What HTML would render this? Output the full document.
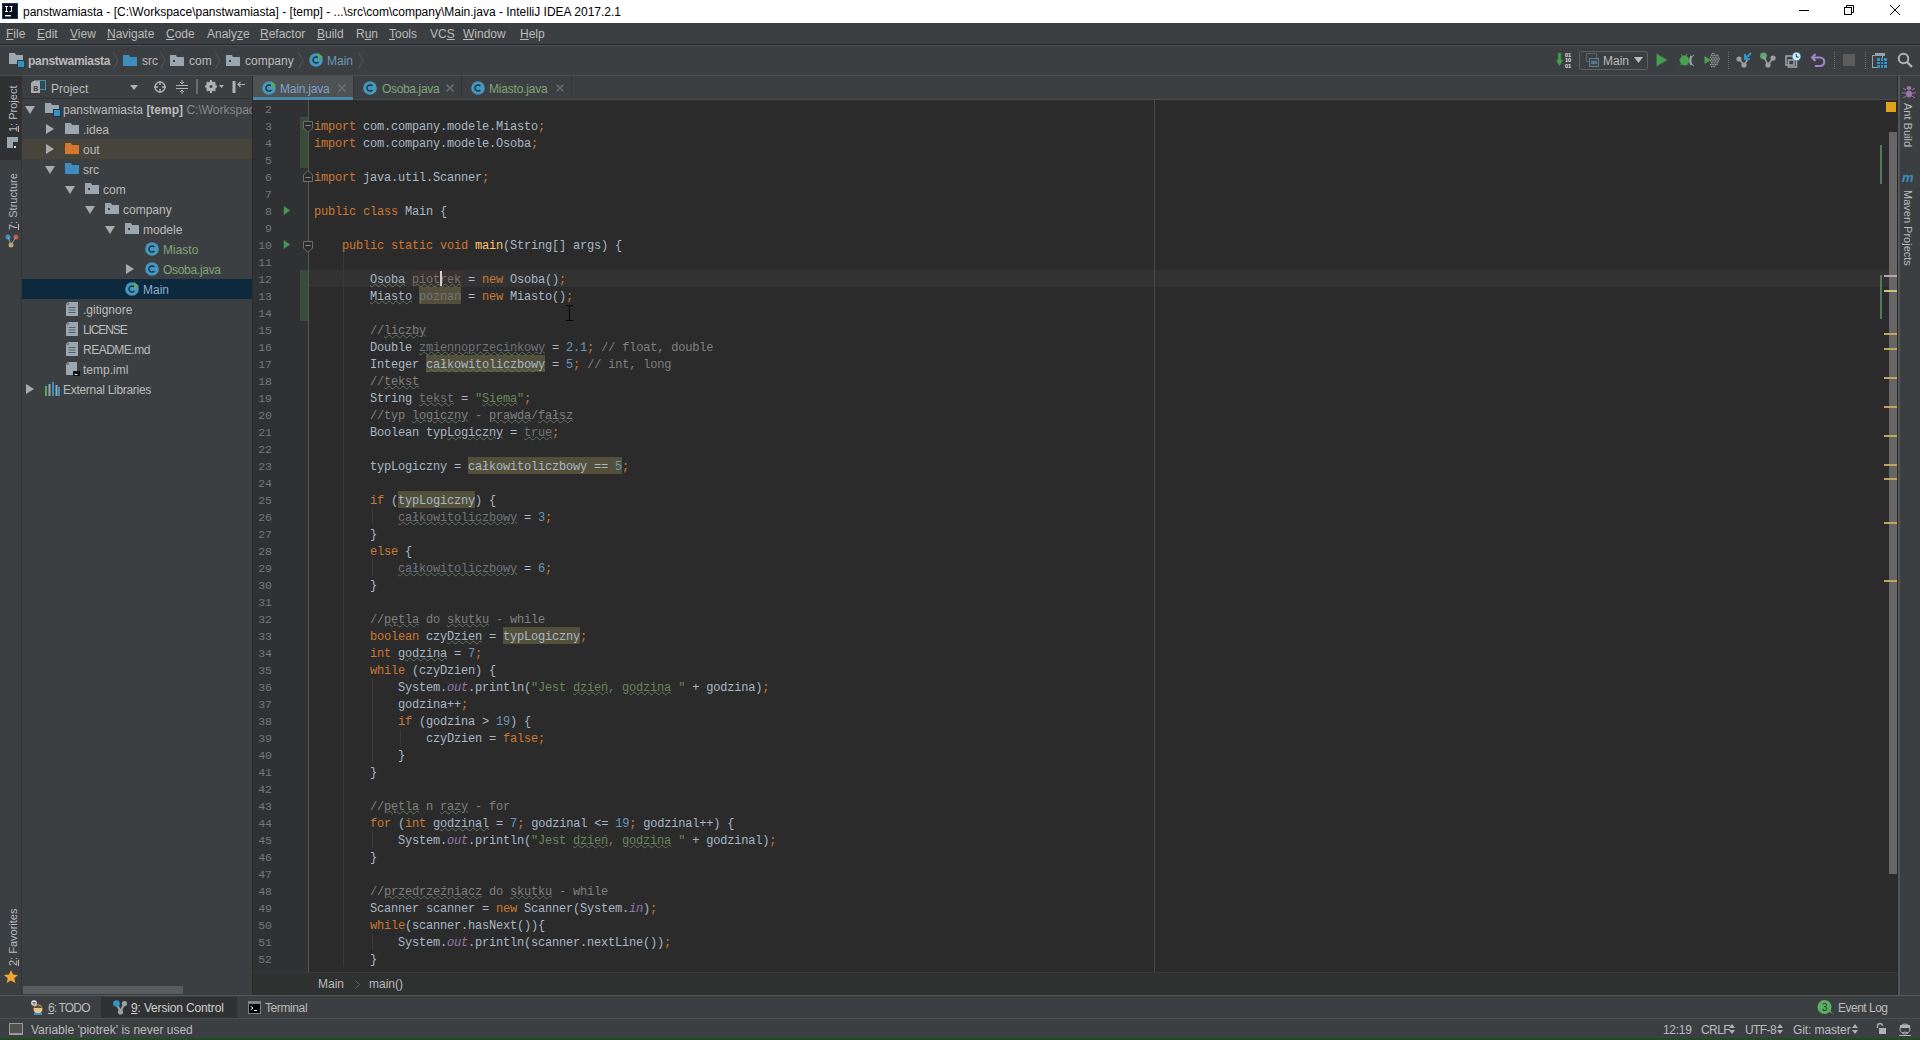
<!DOCTYPE html>
<html><head><meta charset="utf-8">
<style>
*{margin:0;padding:0;box-sizing:border-box}
html,body{width:1920px;height:1040px;overflow:hidden;background:#3C3F41;font-family:"Liberation Sans",sans-serif;font-size:12px;color:#BBBBBB}
.a{position:absolute}
.t{position:absolute;white-space:pre;line-height:14px}
#title{left:0;top:0;width:1920px;height:23px;background:#FFFFFF}
#menu{left:0;top:23px;width:1920px;height:21px;background:#3C3F41}
#nav{left:0;top:46px;width:1920px;height:29px;background:#3C3F41}
#code .l{position:absolute;left:314px;height:17px;line-height:17px;font-family:"Liberation Mono",monospace;font-size:12px;letter-spacing:-0.2px;color:#A9B7C6;white-space:pre}
#gut .n{position:absolute;width:20px;left:252px;text-align:right;height:17px;line-height:17px;font-family:"Liberation Mono",monospace;font-size:11.5px;color:#74777A}
.kw{color:#CC7832}.num{color:#6897BB}.str{color:#6A8759}.cm{color:#808080}.mt{color:#FFC66D}.st{color:#9876AA;font-style:italic}.un{color:#72737A}
.wr{background:#52503A}
.ty{text-decoration:underline wavy #5F7462;text-decoration-thickness:1px;text-underline-offset:0px}
</style></head><body>
<!-- title bar -->
<div id="title" class="a"></div>
<svg class="a" style="left:2px;top:3px" width="16" height="16" viewBox="0 0 16 16"><rect x="0" y="0" width="16" height="16" fill="#07101E"/><rect x="0.5" y="0.5" width="15" height="15" fill="none" stroke="#1E3A5A" stroke-width="1"/><path d="M3 3 H6 V4 H5 V8 H6 V9 H3 V8 H4 V4 H3 Z" fill="#fff"/><path d="M7.5 3 H10.5 V4 H10 V8 Q10 9 9 9 H7.5 V8 H9 V4 H7.5 Z" fill="#fff"/><rect x="3" y="12" width="6" height="1.4" fill="#fff"/></svg>
<div class="t" style="left:23px;top:5px;color:#000;font-size:12px">panstwamiasta - [C:\Workspace\panstwamiasta] - [temp] - ...\src\com\company\Main.java - IntelliJ IDEA 2017.2.1</div>

<div id="menu" class="a"></div>
<div class="a" style="left:0;top:44px;width:1920px;height:1px;background:#25272A"></div>
<div class="a" style="left:0;top:45px;width:1920px;height:1px;background:#4E5254"></div>
<div id="nav" class="a"></div>
<div class="a" style="left:0;top:75px;width:1920px;height:1px;background:#4A4D4F"></div>

<!-- left stripe -->
<div class="a" style="left:0;top:76px;width:21px;height:919px;background:#3C3F41"></div>
<div class="a" style="left:0;top:76px;width:21px;height:84px;background:#2F3133"></div>
<div class="a" style="left:21px;top:76px;width:1px;height:919px;background:#323436"></div>

<!-- project panel -->
<div class="a" style="left:22px;top:76px;width:230px;height:919px;background:#3C3F41"></div>
<div class="a" style="left:22px;top:98px;width:230px;height:1px;background:#323232"></div>
<div class="a" style="left:252px;top:76px;width:1px;height:919px;background:#2B2B2B"></div>

<!-- editor -->
<div class="a" style="left:253px;top:76px;width:1645px;height:23px;background:#3C3F41"></div>
<div class="a" style="left:253px;top:99px;width:1645px;height:1px;background:#4B4B4B"></div>
<div class="a" style="left:253px;top:100px;width:1645px;height:873px;background:#2B2B2B"></div>
<div class="a" style="left:253px;top:100px;width:56px;height:873px;background:#303132"></div>
<div class="a" style="left:308px;top:100px;width:1px;height:873px;background:#555555"></div>
<div class="a" style="left:1154px;top:100px;width:1px;height:873px;background:#4A4A4A"></div>
<div class="a" style="left:253px;top:972px;width:1645px;height:1px;background:#3A3A3A"></div>
<div class="a" style="left:253px;top:973px;width:1645px;height:22px;background:#2F3030"></div>

<!-- right stripe -->
<div class="a" style="left:1897px;top:76px;width:1px;height:919px;background:#2B2B2B"></div>
<div class="a" style="left:1898px;top:76px;width:2px;height:919px;background:#555555"></div>
<div class="a" style="left:1900px;top:76px;width:20px;height:919px;background:#3C3F41"></div>

<!-- bottom -->
<div class="a" style="left:0;top:995px;width:1920px;height:1px;background:#515658"></div>
<div class="a" style="left:0;top:996px;width:1920px;height:22px;background:#3C3F41"></div>
<div class="a" style="left:0;top:1018px;width:1920px;height:1px;background:#4A4D4F"></div>
<div class="a" style="left:0;top:1019px;width:1920px;height:19px;background:#3C3F41"></div>
<div class="a" style="left:0;top:1038px;width:1920px;height:2px;background:#1F4A22"></div>


<!-- editor extras -->
<div class="a" style="left:309px;top:270px;width:1588px;height:17px;background:#323232"></div>
<div class="a" style="left:300px;top:117px;width:8px;height:51px;background:#384C38"></div>
<div class="a" style="left:300px;top:270px;width:8px;height:51px;background:#384C38"></div>
<svg class="a" style="left:281px;top:202px" width="12" height="17"><path d="M2.5 3.5 L9.5 8.5 L2.5 13.5 Z" fill="#4E9259" stroke="#24472A" stroke-width="0.8"/></svg>
<svg class="a" style="left:281px;top:236px" width="12" height="17"><path d="M2.5 3.5 L9.5 8.5 L2.5 13.5 Z" fill="#4E9259" stroke="#24472A" stroke-width="0.8"/></svg>
<svg class="a" style="left:303px;top:118px" width="11" height="17"><path d="M0.5 3.5 H9.5 V10 L5 14.5 L0.5 10 Z" fill="#2B2B2B" stroke="#6E6E6E"/><path d="M2.5 7.5 H7.5" stroke="#8A8A8A"/></svg>
<svg class="a" style="left:303px;top:168px" width="11" height="17"><path d="M0.5 13.5 H9.5 V7 L5 2.5 L0.5 7 Z" fill="#2B2B2B" stroke="#6E6E6E"/><path d="M2.5 9.5 H7.5" stroke="#8A8A8A"/></svg>
<svg class="a" style="left:303px;top:237px" width="11" height="17"><path d="M0.5 4.5 H9.5 V11 L5 15.5 L0.5 11 Z" fill="#2B2B2B" stroke="#6E6E6E"/><path d="M2.5 8.5 H7.5" stroke="#8A8A8A"/></svg>
<div class="a" style="left:569px;top:306px;width:1px;height:15px;background:#000"></div>
<div class="a" style="left:566px;top:305px;width:3px;height:1px;background:#000"></div>
<div class="a" style="left:570px;top:305px;width:3px;height:1px;background:#000"></div>
<div class="a" style="left:566px;top:320px;width:3px;height:1px;background:#000"></div>
<div class="a" style="left:570px;top:320px;width:3px;height:1px;background:#000"></div>
<!-- indent guides -->
<div class="a" style="left:343px;top:253px;width:1px;height:714px;background:#393939"></div>
<div class="a" style="left:372px;top:508px;width:1px;height:17px;background:#393939"></div>
<div class="a" style="left:372px;top:559px;width:1px;height:17px;background:#393939"></div>
<div class="a" style="left:372px;top:678px;width:1px;height:85px;background:#393939"></div>
<div class="a" style="left:400px;top:729px;width:1px;height:17px;background:#393939"></div>
<div class="a" style="left:372px;top:831px;width:1px;height:17px;background:#393939"></div>
<div class="a" style="left:372px;top:933px;width:1px;height:17px;background:#393939"></div>
<!-- right error stripe -->
<div class="a" style="left:1886px;top:102px;width:10px;height:10px;background:#E0A21D"></div>
<div class="a" style="left:1889px;top:132px;width:8px;height:742px;background:#666666"></div>
<div class="a" style="left:1880px;top:145px;width:2px;height:39px;background:#4F7A5F"></div>
<div class="a" style="left:1880px;top:275px;width:2px;height:44px;background:#4F7A5F"></div>
<div class="a" style="left:1884px;top:275px;width:13px;height:2px;background:#C99EA5"></div>
<div class="a" style="left:1884px;top:290px;width:13px;height:2px;background:#CEC27A"></div>
<div class="a" style="left:1884px;top:333px;width:13px;height:2px;background:#BEA560"></div>
<div class="a" style="left:1884px;top:348px;width:13px;height:2px;background:#BEA560"></div>
<div class="a" style="left:1884px;top:377px;width:13px;height:2px;background:#BEA560"></div>
<div class="a" style="left:1884px;top:406px;width:13px;height:2px;background:#BEA560"></div>
<div class="a" style="left:1884px;top:435px;width:13px;height:2px;background:#BEA560"></div>
<div class="a" style="left:1884px;top:464px;width:13px;height:2px;background:#BEA560"></div>
<div class="a" style="left:1884px;top:478px;width:13px;height:2px;background:#BEA560"></div>
<div class="a" style="left:1884px;top:522px;width:13px;height:2px;background:#BEA560"></div>
<div class="a" style="left:1884px;top:580px;width:13px;height:2px;background:#BEA560"></div>
<div class="a" style="left:1799px;top:10px;width:10px;height:1px;background:#000;"></div>
<svg class="a" style="left:1843px;top:4px" width="12" height="12" viewBox="0 0 12 12"><rect x="1.5" y="3.5" width="7" height="7" fill="none" stroke="#000"/><path d="M3.5 3.5 V1.5 H10.5 V8.5 H8.5" fill="none" stroke="#000"/></svg>
<svg class="a" style="left:1889px;top:4px" width="12" height="12" viewBox="0 0 12 12"><path d="M1 1 L11 11 M11 1 L1 11" stroke="#000" stroke-width="1"/></svg>
<div class="a" style="left:1154px;top:270px;width:1px;height:17px;background:#4A4A4A;"></div>
<div class="t" style="left:6px;top:27px;color:#BBBBBB;"><u>F</u>ile</div>
<div class="t" style="left:37px;top:27px;color:#BBBBBB;"><u>E</u>dit</div>
<div class="t" style="left:70px;top:27px;color:#BBBBBB;"><u>V</u>iew</div>
<div class="t" style="left:107px;top:27px;color:#BBBBBB;"><u>N</u>avigate</div>
<div class="t" style="left:166px;top:27px;color:#BBBBBB;"><u>C</u>ode</div>
<div class="t" style="left:207px;top:27px;color:#BBBBBB;">Analy<u>z</u>e</div>
<div class="t" style="left:260px;top:27px;color:#BBBBBB;"><u>R</u>efactor</div>
<div class="t" style="left:317px;top:27px;color:#BBBBBB;"><u>B</u>uild</div>
<div class="t" style="left:356px;top:27px;color:#BBBBBB;">R<u>u</u>n</div>
<div class="t" style="left:389px;top:27px;color:#BBBBBB;"><u>T</u>ools</div>
<div class="t" style="left:430px;top:27px;color:#BBBBBB;">VC<u>S</u></div>
<div class="t" style="left:463px;top:27px;color:#BBBBBB;"><u>W</u>indow</div>
<div class="t" style="left:520px;top:27px;color:#BBBBBB;"><u>H</u>elp</div>
<svg class="a" style="left:9px;top:53px" width="17" height="15" viewBox="0 0 17 15"><path d="M0 0 H6 L7 2 H14 V11 H0 Z" fill="#9AA7B0"/><rect x="8.5" y="7.5" width="7" height="7" fill="#3592C4" stroke="#2B3A45"/></svg>
<div class="t" style="left:28px;top:54px;color:#BBBBBB;font-weight:bold;letter-spacing:-0.3px">panstwamiasta</div>
<svg class="a" style="left:113px;top:52px" width="6" height="17" viewBox="0 0 6 17"><path d="M0.5 0.5 L5 8.5 L0.5 16.5" fill="none" stroke="#55585A" stroke-width="1"/></svg>
<svg class="a" style="left:123px;top:55px" width="14" height="11" viewBox="0 0 14 11"><path d="M0 0 H6 L7 2 H14 V11 H0 Z" fill="#3F8DC0"/></svg>
<div class="t" style="left:142px;top:54px;color:#BBBBBB;">src</div>
<svg class="a" style="left:160px;top:52px" width="6" height="17" viewBox="0 0 6 17"><path d="M0.5 0.5 L5 8.5 L0.5 16.5" fill="none" stroke="#55585A" stroke-width="1"/></svg>
<svg class="a" style="left:170px;top:55px" width="14" height="11" viewBox="0 0 14 11"><path d="M0 0 H6 L7 2 H14 V11 H0 Z" fill="#9AA7B0"/><rect x="3" y="5" width="2" height="2" fill="#3C3F41"/></svg>
<div class="t" style="left:189px;top:54px;color:#BBBBBB;">com</div>
<svg class="a" style="left:215px;top:52px" width="6" height="17" viewBox="0 0 6 17"><path d="M0.5 0.5 L5 8.5 L0.5 16.5" fill="none" stroke="#55585A" stroke-width="1"/></svg>
<svg class="a" style="left:226px;top:55px" width="14" height="11" viewBox="0 0 14 11"><path d="M0 0 H6 L7 2 H14 V11 H0 Z" fill="#9AA7B0"/><rect x="3" y="5" width="2" height="2" fill="#3C3F41"/></svg>
<div class="t" style="left:245px;top:54px;color:#BBBBBB;">company</div>
<svg class="a" style="left:298px;top:52px" width="6" height="17" viewBox="0 0 6 17"><path d="M0.5 0.5 L5 8.5 L0.5 16.5" fill="none" stroke="#55585A" stroke-width="1"/></svg>
<svg class="a" style="left:309px;top:53px" width="14" height="14" viewBox="0 0 14 14"><circle cx="7" cy="7" r="6.8" fill="#4896BC"/><path d="M9.4 4.9 A3.1 3.1 0 1 0 9.4 9.1" fill="none" stroke="#0C3A54" stroke-width="1.5"/><path d="M9 0 L14 4 L9 8 Z" fill="#59A869"/></svg>
<div class="t" style="left:327px;top:54px;color:#6897BB;">Main</div>
<svg class="a" style="left:358px;top:52px" width="6" height="17" viewBox="0 0 6 17"><path d="M0.5 0.5 L5 8.5 L0.5 16.5" fill="none" stroke="#55585A" stroke-width="1"/></svg>
<svg class="a" style="left:1556px;top:52px" width="17" height="16" viewBox="0 0 17 16"><path d="M2 1 H5 V8 H7 L3.5 14 L0 8 H2 Z" fill="#49A052" stroke="#2D6B34" stroke-width="0.6"/><text x="9" y="5.2" font-family="Liberation Sans" font-weight="bold" font-size="5.6" fill="#E0E0E0">01</text><text x="9" y="10.4" font-family="Liberation Sans" font-weight="bold" font-size="5.6" fill="#E0E0E0">10</text><text x="9" y="15.6" font-family="Liberation Sans" font-weight="bold" font-size="5.6" fill="#E0E0E0">01</text></svg>
<div class="a" style="left:1579px;top:51px;width:69px;height:19px;border:1px solid #5E6060;border-radius:3px;background:#3C3F41"></div>
<svg class="a" style="left:1585px;top:53px" width="15" height="15" viewBox="0 0 15 15"><rect x="1.5" y="0.5" width="10" height="8" fill="none" stroke="#5E6366"/><rect x="4.5" y="5.5" width="9" height="8" fill="#3A4A52" stroke="#5F7A88"/><rect x="6" y="8" width="6" height="3" fill="#557888"/></svg>
<div class="t" style="left:1603px;top:54px;color:#BBBBBB;">Main</div>
<svg class="a" style="left:1634px;top:57px" width="9" height="6" viewBox="0 0 9 6"><path d="M0 0 H9 L4.5 6 Z" fill="#BBBBBB"/></svg>
<svg class="a" style="left:1656px;top:53px" width="12" height="14" viewBox="0 0 12 14"><path d="M0.5 0.5 L11.5 7 L0.5 13.5 Z" fill="#499C54" stroke="#2F6B38" stroke-width="0.8"/></svg>
<svg class="a" style="left:1679px;top:52px" width="17" height="16" viewBox="0 0 17 16"><path d="M2 2 L4 4.5 M8 2 L6.5 4.5 M0 8 H2.5 M1 13.5 L3 11.5 M9 13.5 L7.5 11.5" stroke="#49A052" stroke-width="1"/><ellipse cx="5.5" cy="8.5" rx="4.5" ry="5" fill="#49A052"/><path d="M12.5 4 Q10 8.5 12.5 13" fill="none" stroke="#A0A3A6" stroke-width="2.2"/><path d="M13 4.5 L15 3 M13 12.5 L15 14" stroke="#A0A3A6" stroke-width="1"/></svg>
<svg class="a" style="left:1704px;top:52px" width="16" height="16" viewBox="0 0 16 16"><path d="M0.5 4 L7 8 L0.5 12 Z" fill="#49A052"/><circle cx="8.2" cy="1.3" r="0.65" fill="#A8AAAC"/><circle cx="9.8" cy="1.3" r="0.65" fill="#A8AAAC"/><circle cx="7.4" cy="3.2" r="0.65" fill="#A8AAAC"/><circle cx="9.0" cy="3.2" r="0.65" fill="#A8AAAC"/><circle cx="10.6" cy="3.2" r="0.65" fill="#A8AAAC"/><circle cx="12.2" cy="3.2" r="0.65" fill="#A8AAAC"/><circle cx="13.8" cy="3.2" r="0.65" fill="#A8AAAC"/><circle cx="6.6" cy="5.1" r="0.65" fill="#A8AAAC"/><circle cx="8.2" cy="5.1" r="0.65" fill="#A8AAAC"/><circle cx="9.8" cy="5.1" r="0.65" fill="#A8AAAC"/><circle cx="11.4" cy="5.1" r="0.65" fill="#A8AAAC"/><circle cx="13.0" cy="5.1" r="0.65" fill="#A8AAAC"/><circle cx="14.6" cy="5.1" r="0.65" fill="#A8AAAC"/><circle cx="7.4" cy="7.0" r="0.65" fill="#A8AAAC"/><circle cx="9.0" cy="7.0" r="0.65" fill="#A8AAAC"/><circle cx="10.6" cy="7.0" r="0.65" fill="#A8AAAC"/><circle cx="12.2" cy="7.0" r="0.65" fill="#A8AAAC"/><circle cx="13.8" cy="7.0" r="0.65" fill="#A8AAAC"/><circle cx="15.4" cy="7.0" r="0.65" fill="#A8AAAC"/><circle cx="6.6" cy="8.9" r="0.65" fill="#A8AAAC"/><circle cx="8.2" cy="8.9" r="0.65" fill="#A8AAAC"/><circle cx="9.8" cy="8.9" r="0.65" fill="#A8AAAC"/><circle cx="11.4" cy="8.9" r="0.65" fill="#A8AAAC"/><circle cx="13.0" cy="8.9" r="0.65" fill="#A8AAAC"/><circle cx="14.6" cy="8.9" r="0.65" fill="#A8AAAC"/><circle cx="7.4" cy="10.8" r="0.65" fill="#A8AAAC"/><circle cx="9.0" cy="10.8" r="0.65" fill="#A8AAAC"/><circle cx="10.6" cy="10.8" r="0.65" fill="#A8AAAC"/><circle cx="12.2" cy="10.8" r="0.65" fill="#A8AAAC"/><circle cx="13.8" cy="10.8" r="0.65" fill="#A8AAAC"/><circle cx="6.6" cy="12.7" r="0.65" fill="#A8AAAC"/><circle cx="8.2" cy="12.7" r="0.65" fill="#A8AAAC"/><circle cx="9.8" cy="12.7" r="0.65" fill="#A8AAAC"/><circle cx="11.4" cy="12.7" r="0.65" fill="#A8AAAC"/><circle cx="13.0" cy="12.7" r="0.65" fill="#A8AAAC"/><circle cx="7.4" cy="14.6" r="0.65" fill="#A8AAAC"/><circle cx="9.0" cy="14.6" r="0.65" fill="#A8AAAC"/><circle cx="10.6" cy="14.6" r="0.65" fill="#A8AAAC"/></svg>
<svg class="a" style="left:1728px;top:52px" width="1" height="17" viewBox="0 0 1 17"><rect x="0" y="0" width="1" height="1" fill="#6E6E6E"/><rect x="0" y="2" width="1" height="1" fill="#6E6E6E"/><rect x="0" y="4" width="1" height="1" fill="#6E6E6E"/><rect x="0" y="6" width="1" height="1" fill="#6E6E6E"/><rect x="0" y="8" width="1" height="1" fill="#6E6E6E"/><rect x="0" y="10" width="1" height="1" fill="#6E6E6E"/><rect x="0" y="12" width="1" height="1" fill="#6E6E6E"/><rect x="0" y="14" width="1" height="1" fill="#6E6E6E"/><rect x="0" y="16" width="1" height="1" fill="#6E6E6E"/></svg>
<svg class="a" style="left:1834px;top:52px" width="1" height="17" viewBox="0 0 1 17"><rect x="0" y="0" width="1" height="1" fill="#6E6E6E"/><rect x="0" y="2" width="1" height="1" fill="#6E6E6E"/><rect x="0" y="4" width="1" height="1" fill="#6E6E6E"/><rect x="0" y="6" width="1" height="1" fill="#6E6E6E"/><rect x="0" y="8" width="1" height="1" fill="#6E6E6E"/><rect x="0" y="10" width="1" height="1" fill="#6E6E6E"/><rect x="0" y="12" width="1" height="1" fill="#6E6E6E"/><rect x="0" y="14" width="1" height="1" fill="#6E6E6E"/><rect x="0" y="16" width="1" height="1" fill="#6E6E6E"/></svg>
<svg class="a" style="left:1865px;top:52px" width="1" height="17" viewBox="0 0 1 17"><rect x="0" y="0" width="1" height="1" fill="#6E6E6E"/><rect x="0" y="2" width="1" height="1" fill="#6E6E6E"/><rect x="0" y="4" width="1" height="1" fill="#6E6E6E"/><rect x="0" y="6" width="1" height="1" fill="#6E6E6E"/><rect x="0" y="8" width="1" height="1" fill="#6E6E6E"/><rect x="0" y="10" width="1" height="1" fill="#6E6E6E"/><rect x="0" y="12" width="1" height="1" fill="#6E6E6E"/><rect x="0" y="14" width="1" height="1" fill="#6E6E6E"/><rect x="0" y="16" width="1" height="1" fill="#6E6E6E"/></svg>
<svg class="a" style="left:1736px;top:52px" width="16" height="16" viewBox="0 0 16 16"><circle cx="3" cy="7" r="2.6" fill="#9AA1A6"/><circle cx="8" cy="13" r="2.6" fill="#9AA1A6"/><path d="M3 7 L8 13" stroke="#9AA1A6" stroke-width="1.5"/><path d="M8 13 L12 7" stroke="#9AA1A6" stroke-width="1.5"/><path d="M15 1 L9 7 M9 2 V7 H14" fill="none" stroke="#3592C4" stroke-width="2.2"/></svg>
<svg class="a" style="left:1760px;top:52px" width="16" height="16" viewBox="0 0 16 16"><circle cx="3.5" cy="4" r="3.4" fill="#59A869"/><circle cx="13" cy="6" r="2.6" fill="#9AA1A6"/><circle cx="8" cy="13" r="2.6" fill="#9AA1A6"/><path d="M3.5 4 L8 13 L13 6" fill="none" stroke="#9AA1A6" stroke-width="1.5"/></svg>
<svg class="a" style="left:1785px;top:52px" width="16" height="16" viewBox="0 0 16 16"><rect x="1" y="4" width="8" height="9" fill="none" stroke="#9AA1A6" stroke-width="1.6"/><rect x="3.5" y="8" width="8" height="7" fill="none" stroke="#9AA1A6" stroke-width="1.6"/><circle cx="11.5" cy="4.5" r="4.3" fill="#D6E9F5" stroke="#2F7FB0" stroke-width="0.8"/><path d="M11.3 2 V5 H13.8" fill="none" stroke="#1E3A50" stroke-width="1"/></svg>
<svg class="a" style="left:1811px;top:52px" width="15" height="16" viewBox="0 0 15 16"><path d="M4.5 2 L1 5.5 L4.5 9" fill="none" stroke="#9E86C8" stroke-width="2.2"/><path d="M1.5 5.5 H9 A4.2 4.2 0 0 1 9 14 H4" fill="none" stroke="#9E86C8" stroke-width="2.2"/></svg>
<div class="a" style="left:1843px;top:54px;width:12px;height:12px;background:#5C5C5C;"></div>
<svg class="a" style="left:1872px;top:52px" width="16" height="16" viewBox="0 0 16 16"><rect x="0.5" y="3.5" width="10" height="12" fill="none" stroke="#9AA1A6"/><rect x="3" y="1" width="10" height="3" fill="#9AA1A6"/><rect x="5" y="6" width="10" height="10" fill="#3592C4"/><path d="M5 9.5 H15 M5 12.5 H15 M8.5 6 V16 M11.5 6 V16" stroke="#3C3F41" stroke-width="1"/></svg>
<svg class="a" style="left:1897px;top:52px" width="16" height="16" viewBox="0 0 16 16"><circle cx="6.5" cy="6.5" r="4.8" fill="none" stroke="#AFB1B3" stroke-width="2"/><path d="M10 10 L15 15" stroke="#AFB1B3" stroke-width="2.4"/></svg>
<div class="t" style="left:6px;top:132px;font-size:11px;transform-origin:0 0;transform:rotate(-90deg);color:#BBBBBB"><u>1</u>: Project</div>
<svg class="a" style="left:7px;top:137px" width="12" height="12" viewBox="0 0 12 12"><path d="M0 0 H11 V5 H6 V11 H0 Z" fill="#9AA7B0"/><rect x="7" y="9" width="2" height="2" fill="#DDD"/></svg>
<div class="t" style="left:6px;top:230px;font-size:11px;transform-origin:0 0;transform:rotate(-90deg);color:#BBBBBB"><u>7</u>: Structure</div>
<svg class="a" style="left:5px;top:234px" width="14" height="14" viewBox="0 0 14 14"><circle cx="3" cy="3" r="2.5" fill="#3592C4"/><circle cx="11" cy="3" r="2.5" fill="#C75450"/><circle cx="6" cy="11" r="2.5" fill="#C9A36B"/><path d="M3 3 L6 11 L11 3" fill="none" stroke="#9AA1A6" stroke-width="1"/></svg>
<div class="t" style="left:6px;top:966px;font-size:11px;transform-origin:0 0;transform:rotate(-90deg);color:#BBBBBB"><u>2</u>: Favorites</div>
<svg class="a" style="left:4px;top:970px" width="14" height="13" viewBox="0 0 14 13"><path d="M7 0 L9 4.5 L14 5 L10.3 8.3 L11.4 13 L7 10.5 L2.6 13 L3.7 8.3 L0 5 L5 4.5 Z" fill="#F0A732"/></svg>
<div class="t" style="left:1915px;top:103px;font-size:11px;transform-origin:0 0;transform:rotate(90deg);color:#BBBBBB">Ant Build</div>
<svg class="a" style="left:1902px;top:84px" width="14" height="14" viewBox="0 0 14 14"><ellipse cx="7" cy="4" rx="2.5" ry="2" fill="#9876AA"/><ellipse cx="7" cy="10" rx="3" ry="3.5" fill="#9876AA"/><path d="M1 4 L4 6 M13 4 L10 6 M0 9 H4 M14 9 H10 M1 14 L4 12 M13 14 L10 12" stroke="#9876AA"/></svg>
<svg class="a" style="left:1901px;top:171px" width="16" height="13" viewBox="0 0 16 13"><text x="1" y="11" font-family="Liberation Sans" font-weight="bold" font-style="italic" font-size="13" fill="#3592C4">m</text></svg>
<div class="t" style="left:1915px;top:190px;font-size:11px;transform-origin:0 0;transform:rotate(90deg);color:#BBBBBB">Maven Projects</div>
<svg class="a" style="left:31px;top:80px" width="16" height="14" viewBox="0 0 16 14"><rect x="3.5" y="0.5" width="11" height="9" fill="#2F4A58" stroke="#4C8DAE"/><path d="M0 3 L2 1 H9 V13 H0 Z" fill="#A9ABAD"/><text x="2.2" y="11" font-family="Liberation Sans" font-weight="bold" font-size="7" fill="#3A3A3A">B</text></svg>
<div class="t" style="left:51px;top:82px;color:#BBBBBB;">Project</div>
<svg class="a" style="left:130px;top:85px" width="8" height="5" viewBox="0 0 8 5"><path d="M0 0 H8 L4 5 Z" fill="#AFB1B3"/></svg>
<svg class="a" style="left:154px;top:81px" width="12" height="12" viewBox="0 0 12 12"><circle cx="6" cy="6" r="5" fill="none" stroke="#AFB1B3" stroke-width="1.5"/><path d="M6 0 V4 M6 8 V12 M0 6 H4 M8 6 H12" stroke="#AFB1B3" stroke-width="1.5"/></svg>
<svg class="a" style="left:176px;top:80px" width="12" height="14" viewBox="0 0 12 14"><path d="M0 5.5 H12 M0 8.5 H12" stroke="#AFB1B3" stroke-width="1"/><path d="M6 0 V4 M4 2 L6 4 L8 2 M6 14 V10 M4 12 L6 10 L8 12" fill="none" stroke="#AFB1B3" stroke-width="1"/></svg>
<div class="a" style="left:196px;top:79px;width:2px;height:15px;background:#6A6C6E;"></div>
<svg class="a" style="left:205px;top:80px" width="19" height="13" viewBox="0 0 19 13"><circle cx="6" cy="6.5" r="3.5" fill="none" stroke="#AFB1B3" stroke-width="3"/><path d="M6 0 V13 M0 6.5 H12 M1.8 2.3 L10.2 10.7 M10.2 2.3 L1.8 10.7" stroke="#AFB1B3" stroke-width="2"/><circle cx="6" cy="6.5" r="1.5" fill="#3C3F41"/><path d="M14 5 H19 L16.5 8 Z" fill="#AFB1B3"/></svg>
<svg class="a" style="left:232px;top:80px" width="14" height="13" viewBox="0 0 14 13"><rect x="0.5" y="1" width="3" height="12" fill="#AFB1B3"/><path d="M13 4.5 H6 M8.5 2 L6 4.5 L8.5 7" fill="none" stroke="#AFB1B3" stroke-width="1.2"/></svg>
<div class="a" style="left:22px;top:139px;width:230px;height:20px;background:#46443B;"></div>
<div class="a" style="left:22px;top:279px;width:230px;height:20px;background:#0D293E;"></div>
<svg class="a" style="left:25px;top:106px" width="10" height="8" viewBox="0 0 10 8"><path d="M0 0 H10 L5 8 Z" fill="#A8ABAD"/></svg>
<svg class="a" style="left:45px;top:103px" width="16" height="14" viewBox="0 0 16 14"><path d="M0 0 H6 L7 2 H14 V10 H0 Z" fill="#9AA7B0"/><rect x="8.5" y="6.5" width="7" height="7" fill="#3592C4" stroke="#22323D"/></svg>
<div class="a" style="left:22px;top:99px;width:230px;height:20px;overflow:hidden"><div class="t" style="left:41px;top:4px;color:#BBBBBB">panstwamiasta <b>[temp]</b> <span style="color:#888888">C:\Workspace\panstwamiasta</span></div></div>
<svg class="a" style="left:46px;top:124px" width="8" height="10" viewBox="0 0 8 10"><path d="M0 0 L8 5 L0 10 Z" fill="#A8ABAD"/></svg>
<svg class="a" style="left:65px;top:123px" width="14" height="11" viewBox="0 0 14 11"><path d="M0 0 H6 L7 2 H14 V11 H0 Z" fill="#9AA7B0"/></svg>
<div class="t" style="left:83px;top:123px;color:#BBBBBB;">.idea</div>
<svg class="a" style="left:46px;top:144px" width="8" height="10" viewBox="0 0 8 10"><path d="M0 0 L8 5 L0 10 Z" fill="#A8ABAD"/></svg>
<svg class="a" style="left:65px;top:143px" width="14" height="11" viewBox="0 0 14 11"><path d="M0 0 H6 L7 2 H14 V11 H0 Z" fill="#D4772C"/></svg>
<div class="t" style="left:83px;top:143px;color:#BBBBBB;">out</div>
<svg class="a" style="left:45px;top:166px" width="10" height="8" viewBox="0 0 10 8"><path d="M0 0 H10 L5 8 Z" fill="#A8ABAD"/></svg>
<svg class="a" style="left:65px;top:163px" width="14" height="11" viewBox="0 0 14 11"><path d="M0 0 H6 L7 2 H14 V11 H0 Z" fill="#3F8DC0"/></svg>
<div class="t" style="left:83px;top:163px;color:#BBBBBB;">src</div>
<svg class="a" style="left:65px;top:186px" width="10" height="8" viewBox="0 0 10 8"><path d="M0 0 H10 L5 8 Z" fill="#A8ABAD"/></svg>
<svg class="a" style="left:85px;top:183px" width="14" height="11" viewBox="0 0 14 11"><path d="M0 0 H6 L7 2 H14 V11 H0 Z" fill="#9AA7B0"/><rect x="3" y="5" width="2" height="2" fill="#3C3F41"/></svg>
<div class="t" style="left:103px;top:183px;color:#BBBBBB;">com</div>
<svg class="a" style="left:85px;top:206px" width="10" height="8" viewBox="0 0 10 8"><path d="M0 0 H10 L5 8 Z" fill="#A8ABAD"/></svg>
<svg class="a" style="left:105px;top:203px" width="14" height="11" viewBox="0 0 14 11"><path d="M0 0 H6 L7 2 H14 V11 H0 Z" fill="#9AA7B0"/><rect x="3" y="5" width="2" height="2" fill="#3C3F41"/></svg>
<div class="t" style="left:123px;top:203px;color:#BBBBBB;">company</div>
<svg class="a" style="left:105px;top:226px" width="10" height="8" viewBox="0 0 10 8"><path d="M0 0 H10 L5 8 Z" fill="#A8ABAD"/></svg>
<svg class="a" style="left:125px;top:223px" width="14" height="11" viewBox="0 0 14 11"><path d="M0 0 H6 L7 2 H14 V11 H0 Z" fill="#9AA7B0"/><rect x="3" y="5" width="2" height="2" fill="#3C3F41"/></svg>
<div class="t" style="left:143px;top:223px;color:#BBBBBB;">modele</div>
<svg class="a" style="left:145px;top:242px" width="14" height="14" viewBox="0 0 14 14"><circle cx="7" cy="7" r="6.8" fill="#4896BC"/><path d="M9.4 4.9 A3.1 3.1 0 1 0 9.4 9.1" fill="none" stroke="#0C3A54" stroke-width="1.5"/></svg>
<div class="t" style="left:163px;top:243px;color:#7FA577;">Miasto</div>
<svg class="a" style="left:126px;top:264px" width="8" height="10" viewBox="0 0 8 10"><path d="M0 0 L8 5 L0 10 Z" fill="#A8ABAD"/></svg>
<svg class="a" style="left:145px;top:262px" width="14" height="14" viewBox="0 0 14 14"><circle cx="7" cy="7" r="6.8" fill="#4896BC"/><path d="M9.4 4.9 A3.1 3.1 0 1 0 9.4 9.1" fill="none" stroke="#0C3A54" stroke-width="1.5"/></svg>
<div class="t" style="left:163px;top:263px;color:#7FA577;letter-spacing:-0.3px">Osoba.java</div>
<svg class="a" style="left:125px;top:282px" width="14" height="14" viewBox="0 0 14 14"><circle cx="7" cy="7" r="6.8" fill="#4896BC"/><path d="M9.4 4.9 A3.1 3.1 0 1 0 9.4 9.1" fill="none" stroke="#0C3A54" stroke-width="1.5"/><path d="M9 0 L14 4 L9 8 Z" fill="#59A869"/></svg>
<div class="t" style="left:143px;top:283px;color:#8AAFD2;">Main</div>
<svg class="a" style="left:66px;top:302px" width="12" height="14" viewBox="0 0 12 14"><path d="M0 2 L2 0 H12 V14 H0 Z" fill="#9AA7B0"/><path d="M0 3 L3 3 L3 0" fill="#6E767C"/><rect x="2.5" y="5" width="7" height="1" fill="#5A6065"/><rect x="2.5" y="7.5" width="7" height="1" fill="#5A6065"/><rect x="2.5" y="10" width="7" height="1" fill="#5A6065"/></svg>
<div class="t" style="left:83px;top:303px;color:#BBBBBB;">.gitignore</div>
<svg class="a" style="left:66px;top:322px" width="12" height="14" viewBox="0 0 12 14"><path d="M0 2 L2 0 H12 V14 H0 Z" fill="#9AA7B0"/><path d="M0 3 L3 3 L3 0" fill="#6E767C"/><rect x="2.5" y="5" width="7" height="1" fill="#5A6065"/><rect x="2.5" y="7.5" width="7" height="1" fill="#5A6065"/><rect x="2.5" y="10" width="7" height="1" fill="#5A6065"/></svg>
<div class="t" style="left:83px;top:323px;color:#BBBBBB;letter-spacing:-1.1px">LICENSE</div>
<svg class="a" style="left:66px;top:342px" width="12" height="14" viewBox="0 0 12 14"><path d="M0 2 L2 0 H12 V14 H0 Z" fill="#9AA7B0"/><path d="M0 3 L3 3 L3 0" fill="#6E767C"/><rect x="2.5" y="5" width="7" height="1" fill="#5A6065"/><rect x="2.5" y="7.5" width="7" height="1" fill="#5A6065"/><rect x="2.5" y="10" width="7" height="1" fill="#5A6065"/></svg>
<div class="t" style="left:83px;top:343px;color:#BBBBBB;letter-spacing:-0.5px">README.md</div>
<svg class="a" style="left:66px;top:362px" width="14" height="14" viewBox="0 0 14 14"><path d="M0 2 L2 0 H11 V13 H0 Z" fill="#9AA7B0"/><path d="M0 3 L3 3 L3 0" fill="#6E767C"/><rect x="7" y="9" width="7" height="5" fill="#111"/><rect x="8.5" y="12" width="3" height="1" fill="#ddd"/></svg>
<div class="t" style="left:83px;top:363px;color:#BBBBBB;">temp.iml</div>
<svg class="a" style="left:26px;top:384px" width="8" height="10" viewBox="0 0 8 10"><path d="M0 0 L8 5 L0 10 Z" fill="#A8ABAD"/></svg>
<svg class="a" style="left:45px;top:382px" width="15" height="14" viewBox="0 0 15 14"><rect x="0" y="4" width="2" height="10" fill="#59A869"/><rect x="3.5" y="2" width="2" height="12" fill="#9AA7B0"/><rect x="7" y="0" width="2" height="14" fill="#3592C4"/><rect x="10.5" y="3" width="2" height="11" fill="#9AA7B0"/><rect x="13" y="5" width="2" height="9" fill="#3592C4"/></svg>
<div class="t" style="left:63px;top:383px;color:#BBBBBB;letter-spacing:-0.3px">External Libraries</div>
<div class="a" style="left:23px;top:986px;width:160px;height:8px;background:#5A5D5F;"></div>
<div class="a" style="left:253px;top:76px;width:100px;height:23px;background:#4E5254;"></div>
<div class="a" style="left:253px;top:97px;width:100px;height:3px;background:#4A88A8;"></div>
<div class="a" style="left:353px;top:76px;width:1px;height:20px;background:#323436;"></div>
<div class="a" style="left:461px;top:76px;width:1px;height:20px;background:#323436;"></div>
<div class="a" style="left:571px;top:76px;width:1px;height:20px;background:#323436;"></div>
<svg class="a" style="left:262px;top:81px" width="14" height="14" viewBox="0 0 14 14"><circle cx="7" cy="7" r="6.8" fill="#4896BC"/><path d="M9.4 4.9 A3.1 3.1 0 1 0 9.4 9.1" fill="none" stroke="#0C3A54" stroke-width="1.5"/><path d="M9 0 L14 4 L9 8 Z" fill="#59A869"/></svg>
<div class="t" style="left:280px;top:82px;color:#7FA3C6;letter-spacing:-0.2px">Main.java</div>
<svg class="a" style="left:338px;top:84px" width="8" height="8" viewBox="0 0 8 8"><path d="M0.5 0.5 L7.5 7.5 M7.5 0.5 L0.5 7.5" stroke="#6E7072" stroke-width="1.4"/></svg>
<svg class="a" style="left:363px;top:81px" width="14" height="14" viewBox="0 0 14 14"><circle cx="7" cy="7" r="6.8" fill="#4896BC"/><path d="M9.4 4.9 A3.1 3.1 0 1 0 9.4 9.1" fill="none" stroke="#0C3A54" stroke-width="1.5"/></svg>
<div class="t" style="left:382px;top:82px;color:#7FA577;letter-spacing:-0.35px">Osoba.java</div>
<svg class="a" style="left:446px;top:84px" width="8" height="8" viewBox="0 0 8 8"><path d="M0.5 0.5 L7.5 7.5 M7.5 0.5 L0.5 7.5" stroke="#6E7072" stroke-width="1.4"/></svg>
<svg class="a" style="left:471px;top:81px" width="14" height="14" viewBox="0 0 14 14"><circle cx="7" cy="7" r="6.8" fill="#4896BC"/><path d="M9.4 4.9 A3.1 3.1 0 1 0 9.4 9.1" fill="none" stroke="#0C3A54" stroke-width="1.5"/></svg>
<div class="t" style="left:489px;top:82px;color:#7FA577;letter-spacing:-0.2px">Miasto.java</div>
<svg class="a" style="left:556px;top:84px" width="8" height="8" viewBox="0 0 8 8"><path d="M0.5 0.5 L7.5 7.5 M7.5 0.5 L0.5 7.5" stroke="#6E7072" stroke-width="1.4"/></svg>
<div class="t" style="left:318px;top:977px;color:#BBBBBB;">Main</div>
<svg class="a" style="left:355px;top:980px" width="5" height="9" viewBox="0 0 5 9"><path d="M0.5 0.5 L4.5 4.5 L0.5 8.5" fill="none" stroke="#5E6060"/></svg>
<div class="t" style="left:369px;top:977px;color:#BBBBBB;">main()</div>
<div class="a" style="left:101px;top:997px;width:136px;height:21px;background:#2F3133;"></div>
<svg class="a" style="left:31px;top:1000px" width="14" height="15" viewBox="0 0 14 15"><circle cx="7" cy="9" r="4.5" fill="#E8C48A"/><path d="M2.5 8 Q7 2 11.5 8" fill="#6B4E2E"/><rect x="3" y="13" width="8" height="2" fill="#3592C4"/><circle cx="3" cy="3" r="2.8" fill="#EEE"/><rect x="1.5" y="2" width="3" height="0.8" fill="#333"/><rect x="1.5" y="3.5" width="3" height="0.8" fill="#333"/></svg>
<div class="t" style="left:48px;top:1001px;color:#BBBBBB;letter-spacing:-0.85px"><u>6</u>: TODO</div>
<svg class="a" style="left:113px;top:1000px" width="15" height="15" viewBox="0 0 15 15"><path d="M3.5 3.5 L7.5 11.5 L11.5 3.5" fill="none" stroke="#9AA1A6" stroke-width="2.2"/><circle cx="3.5" cy="3.5" r="3.3" fill="#3592C4"/><circle cx="11.5" cy="3.5" r="2.6" fill="#9AA1A6"/><circle cx="7.5" cy="12" r="2.6" fill="#9AA1A6"/></svg>
<div class="t" style="left:131px;top:1001px;color:#D0D0D0;letter-spacing:-0.15px"><u>9</u>: Version Control</div>
<svg class="a" style="left:248px;top:1001px" width="13" height="13" viewBox="0 0 13 13"><rect x="0.5" y="0.5" width="12" height="12" fill="#000" stroke="#7F8487"/><rect x="1" y="1" width="11" height="2" fill="#7F8487"/><path d="M2.5 5 L5 7 L2.5 9" fill="none" stroke="#fff" stroke-width="1"/><rect x="6" y="9" width="3" height="1" fill="#fff"/></svg>
<div class="t" style="left:265px;top:1001px;color:#BBBBBB;letter-spacing:-0.4px">Terminal</div>
<svg class="a" style="left:1817px;top:1000px" width="17" height="15" viewBox="0 0 17 15"><circle cx="7.5" cy="7" r="7" fill="#5FAD65"/><path d="M11 11 L16 14 L12 9 Z" fill="#5FAD65"/><text x="5" y="10.5" font-family="Liberation Sans" font-size="10" fill="#173F1A">3</text></svg>
<div class="t" style="left:1838px;top:1001px;color:#BBBBBB;letter-spacing:-0.5px">Event Log</div>
<svg class="a" style="left:9px;top:1023px" width="14" height="12" viewBox="0 0 14 12"><rect x="0.5" y="0.5" width="13" height="10" fill="#505050" stroke="#9A9A9A"/><rect x="0" y="11" width="14" height="1" fill="#9A9A9A"/></svg>
<div class="t" style="left:31px;top:1023px;color:#BBBBBB;">Variable 'piotrek' is never used</div>
<div class="t" style="left:1663px;top:1023px;color:#BBBBBB;letter-spacing:-0.3px">12:19</div>
<div class="t" style="left:1701px;top:1023px;color:#BBBBBB;letter-spacing:-0.6px">CRLF</div>
<svg class="a" style="left:1729px;top:1024px" width="6" height="10" viewBox="0 0 6 10"><path d="M0 4 L3 0 L6 4 Z M0 6 L3 10 L6 6 Z" fill="#AFB1B3"/></svg>
<div class="t" style="left:1745px;top:1023px;color:#BBBBBB;letter-spacing:-0.6px">UTF-8</div>
<svg class="a" style="left:1777px;top:1024px" width="6" height="10" viewBox="0 0 6 10"><path d="M0 4 L3 0 L6 4 Z M0 6 L3 10 L6 6 Z" fill="#AFB1B3"/></svg>
<div class="t" style="left:1793px;top:1023px;color:#BBBBBB;letter-spacing:-0.1px">Git: master</div>
<svg class="a" style="left:1852px;top:1024px" width="6" height="10" viewBox="0 0 6 10"><path d="M0 4 L3 0 L6 4 Z M0 6 L3 10 L6 6 Z" fill="#AFB1B3"/></svg>
<svg class="a" style="left:1876px;top:1023px" width="10" height="11" viewBox="0 0 10 11"><path d="M1.5 5 V3 A2.5 2.5 0 0 1 6.5 3" fill="none" stroke="#AFB1B3" stroke-width="1.4"/><rect x="3" y="5" width="7" height="6" fill="#AFB1B3"/></svg>
<svg class="a" style="left:1899px;top:1023px" width="12" height="13" viewBox="0 0 12 13"><circle cx="6" cy="6" r="5" fill="none" stroke="#AFB1B3"/><rect x="1" y="2" width="10" height="3" fill="#AFB1B3"/><path d="M3 10 Q6 8 9 10 M0 12.5 H12" stroke="#AFB1B3" fill="none"/></svg>
<div id="gut"><div class="n" style="top:101px">2</div>
<div class="n" style="top:118px">3</div>
<div class="n" style="top:135px">4</div>
<div class="n" style="top:152px">5</div>
<div class="n" style="top:169px">6</div>
<div class="n" style="top:186px">7</div>
<div class="n" style="top:203px">8</div>
<div class="n" style="top:220px">9</div>
<div class="n" style="top:237px">10</div>
<div class="n" style="top:254px">11</div>
<div class="n" style="top:271px">12</div>
<div class="n" style="top:288px">13</div>
<div class="n" style="top:305px">14</div>
<div class="n" style="top:322px">15</div>
<div class="n" style="top:339px">16</div>
<div class="n" style="top:356px">17</div>
<div class="n" style="top:373px">18</div>
<div class="n" style="top:390px">19</div>
<div class="n" style="top:407px">20</div>
<div class="n" style="top:424px">21</div>
<div class="n" style="top:441px">22</div>
<div class="n" style="top:458px">23</div>
<div class="n" style="top:475px">24</div>
<div class="n" style="top:492px">25</div>
<div class="n" style="top:509px">26</div>
<div class="n" style="top:526px">27</div>
<div class="n" style="top:543px">28</div>
<div class="n" style="top:560px">29</div>
<div class="n" style="top:577px">30</div>
<div class="n" style="top:594px">31</div>
<div class="n" style="top:611px">32</div>
<div class="n" style="top:628px">33</div>
<div class="n" style="top:645px">34</div>
<div class="n" style="top:662px">35</div>
<div class="n" style="top:679px">36</div>
<div class="n" style="top:696px">37</div>
<div class="n" style="top:713px">38</div>
<div class="n" style="top:730px">39</div>
<div class="n" style="top:747px">40</div>
<div class="n" style="top:764px">41</div>
<div class="n" style="top:781px">42</div>
<div class="n" style="top:798px">43</div>
<div class="n" style="top:815px">44</div>
<div class="n" style="top:832px">45</div>
<div class="n" style="top:849px">46</div>
<div class="n" style="top:866px">47</div>
<div class="n" style="top:883px">48</div>
<div class="n" style="top:900px">49</div>
<div class="n" style="top:917px">50</div>
<div class="n" style="top:934px">51</div>
<div class="n" style="top:951px">52</div></div>
<div class="a" style="left:412px;top:270px;width:49px;height:17px;background:#3B312E"></div>
<div class="a" style="left:419px;top:287px;width:42px;height:17px;background:#52503A"></div>
<div class="a" style="left:426px;top:355px;width:119px;height:17px;background:#52503A"></div>
<div class="a" style="left:468px;top:457px;width:147px;height:17px;background:#52503A"></div>
<div class="a" style="left:615px;top:457px;width:7px;height:17px;background:#52503A"></div>
<div class="a" style="left:398px;top:491px;width:77px;height:17px;background:#52503A"></div>
<div class="a" style="left:503px;top:627px;width:77px;height:17px;background:#52503A"></div>
<div id="code"><div class="l" style="top:102px"></div>
<div class="l" style="top:119px"><span class="kw">import</span> com.company.modele.Miasto<span class="kw">;</span></div>
<div class="l" style="top:136px"><span class="kw">import</span> com.company.modele.Osoba<span class="kw">;</span></div>
<div class="l" style="top:153px"></div>
<div class="l" style="top:170px"><span class="kw">import</span> java.util.Scanner<span class="kw">;</span></div>
<div class="l" style="top:187px"></div>
<div class="l" style="top:204px"><span class="kw">public class</span> Main {</div>
<div class="l" style="top:221px"></div>
<div class="l" style="top:238px">    <span class="kw">public static void</span> <span class="mt">main</span>(String[] args) {</div>
<div class="l" style="top:255px"></div>
<div class="l" style="top:272px">        <span class="ty">Osoba</span> <span class="un ty cr">piotrek</span> = <span class="kw">new</span> Osoba()<span class="kw">;</span></div>
<div class="l" style="top:289px">        <span class="ty">Miasto</span> <span class="un wr">poznań</span> = <span class="kw">new</span> Miasto()<span class="kw">;</span></div>
<div class="l" style="top:306px"></div>
<div class="l" style="top:323px">        <span class="cm">//</span><span class="cm ty">liczby</span></div>
<div class="l" style="top:340px">        Double <span class="un ty">zmiennoprzecinkowy</span> = <span class="num">2.1</span><span class="kw">;</span> <span class="cm">// float, double</span></div>
<div class="l" style="top:357px">        Integer <span class="wr ty">całkowitoliczbowy</span> = <span class="num">5</span><span class="kw">;</span> <span class="cm">// int, long</span></div>
<div class="l" style="top:374px">        <span class="cm">//</span><span class="cm ty">tekst</span></div>
<div class="l" style="top:391px">        String <span class="un ty">tekst</span> = <span class="str">&quot;</span><span class="str ty">Siema</span><span class="str">&quot;</span><span class="kw">;</span></div>
<div class="l" style="top:408px">        <span class="cm">//typ </span><span class="cm ty">logiczny</span><span class="cm"> - </span><span class="cm ty">prawda</span><span class="cm">/</span><span class="cm ty">fałsz</span></div>
<div class="l" style="top:425px">        Boolean typ<span class="ty">Logiczny</span> = <span class="un ty">true</span><span class="kw">;</span></div>
<div class="l" style="top:442px"></div>
<div class="l" style="top:459px">        typLogiczny = <span class="wr">całkowitoliczbowy == </span><span class="wr num">5</span><span class="kw">;</span></div>
<div class="l" style="top:476px"></div>
<div class="l" style="top:493px">        <span class="kw">if</span> (<span class="wr">typLogiczny</span>) {</div>
<div class="l" style="top:510px">            <span class="un ty">całkowitoliczbowy</span> = <span class="num">3</span><span class="kw">;</span></div>
<div class="l" style="top:527px">        }</div>
<div class="l" style="top:544px">        <span class="kw">else</span> {</div>
<div class="l" style="top:561px">            <span class="un ty">całkowitoliczbowy</span> = <span class="num">6</span><span class="kw">;</span></div>
<div class="l" style="top:578px">        }</div>
<div class="l" style="top:595px"></div>
<div class="l" style="top:612px">        <span class="cm">//</span><span class="cm ty">pętla</span><span class="cm"> do </span><span class="cm ty">skutku</span><span class="cm"> - while</span></div>
<div class="l" style="top:629px">        <span class="kw">boolean</span> czy<span class="ty">Dzien</span> = <span class="wr">typLogiczny</span><span class="kw">;</span></div>
<div class="l" style="top:646px">        <span class="kw">int</span> <span class="ty">godzina</span> = <span class="num">7</span><span class="kw">;</span></div>
<div class="l" style="top:663px">        <span class="kw">while</span> (czyDzien) {</div>
<div class="l" style="top:680px">            System.<span class="st">out</span>.println(<span class="str">&quot;Jest </span><span class="str ty">dzień</span><span class="str">, </span><span class="str ty">godzina</span><span class="str"> &quot;</span> + godzina)<span class="kw">;</span></div>
<div class="l" style="top:697px">            godzina++<span class="kw">;</span></div>
<div class="l" style="top:714px">            <span class="kw">if</span> (godzina &gt; <span class="num">19</span>) {</div>
<div class="l" style="top:731px">                czyDzien = <span class="kw">false;</span></div>
<div class="l" style="top:748px">            }</div>
<div class="l" style="top:765px">        }</div>
<div class="l" style="top:782px"></div>
<div class="l" style="top:799px">        <span class="cm">//</span><span class="cm ty">pętla</span><span class="cm"> n </span><span class="cm ty">razy</span><span class="cm"> - for</span></div>
<div class="l" style="top:816px">        <span class="kw">for</span> (<span class="kw">int</span> <span class="ty">godzinal</span> = <span class="num">7</span><span class="kw">;</span> godzinal &lt;= <span class="num">19</span><span class="kw">;</span> godzinal++) {</div>
<div class="l" style="top:833px">            System.<span class="st">out</span>.println(<span class="str">&quot;Jest </span><span class="str ty">dzień</span><span class="str">, </span><span class="str ty">godzina</span><span class="str"> &quot;</span> + godzinal)<span class="kw">;</span></div>
<div class="l" style="top:850px">        }</div>
<div class="l" style="top:867px"></div>
<div class="l" style="top:884px">        <span class="cm">//</span><span class="cm ty">przedrzeźniacz</span><span class="cm"> do </span><span class="cm ty">skutku</span><span class="cm"> - while</span></div>
<div class="l" style="top:901px">        Scanner scanner = <span class="kw">new</span> Scanner(System.<span class="st">in</span>)<span class="kw">;</span></div>
<div class="l" style="top:918px">        <span class="kw">while</span>(scanner.hasNext()){</div>
<div class="l" style="top:935px">            System.<span class="st">out</span>.println(scanner.nextLine())<span class="kw">;</span></div>
<div class="l" style="top:952px">        }</div></div>
<div class="a" style="left:440px;top:271px;width:2px;height:15px;background:#CFCFCF"></div>
</body></html>
